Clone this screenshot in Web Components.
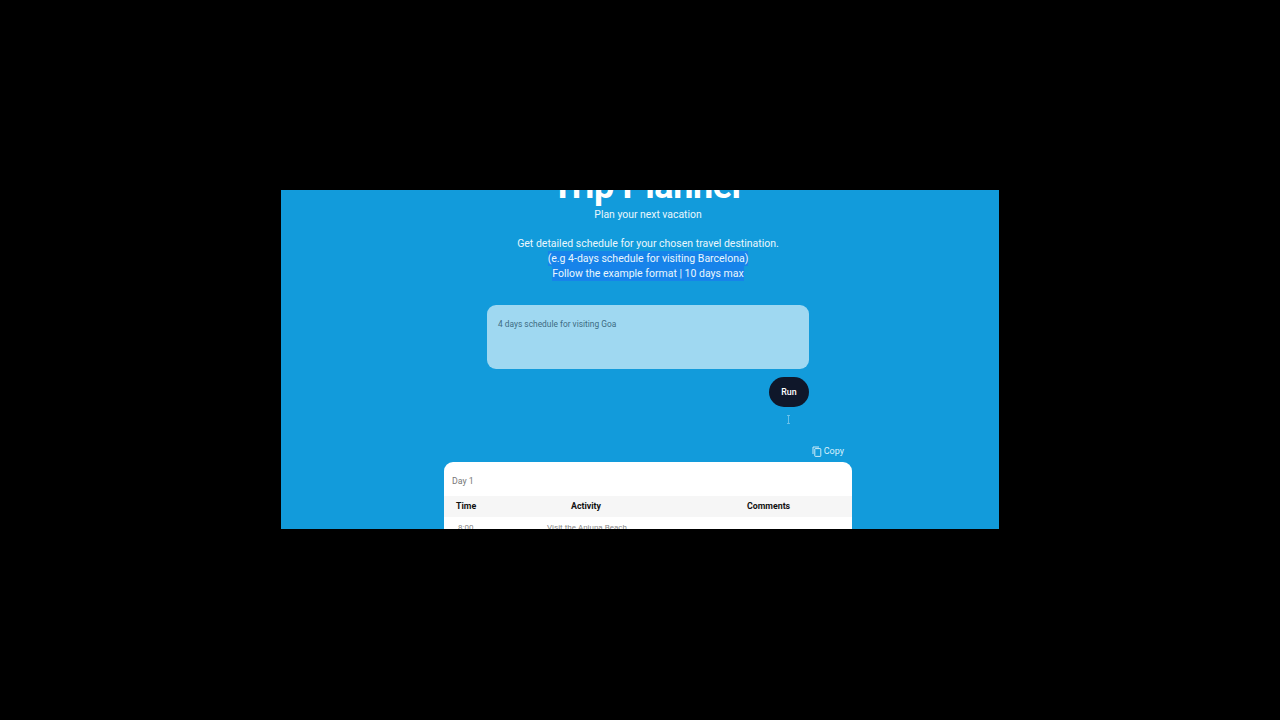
<!DOCTYPE html>
<html>
<head>
<meta charset="utf-8">
<title>Trip Planner</title>
<style>
html, body { margin: 0; height: 100%; background: #000; }
body { display: flex; align-items: center; justify-content: center; font-family: Roboto, "Open Sans", sans-serif; }
</style>
</head>
<body>
<trip-frame>
  <trip-header></trip-header>
  <trip-form></trip-form>
  <trip-result></trip-result>
</trip-frame>
<script>
class TripFrame extends HTMLElement {
  constructor() {
    super();
    this.attachShadow({mode: 'open'}).innerHTML = `
    <style>
    :host {
      display: flex;
      flex-direction: column;
      align-items: center;
      width: 702px;
      height: 339px;
      padding-left: 16px;
      margin-top: -1px;
      overflow: hidden;
      background: #129bdb;
      color: #fff;
    }
    </style>
    <slot></slot>`;
  }
}

class TripHeader extends HTMLElement {
  constructor() {
    super();
    this.attachShadow({mode: 'open'}).innerHTML = `
    <style>
    :host { display: flex; flex-direction: column; align-items: center; margin-top: -24px; }
    h1 { margin: 0; font-size: 36px; line-height: 41px; font-weight: 700; letter-spacing: -0.4px; }
    .sub { font-size: 10.400px; line-height: 15px; color: #eaf7fd; }
    .desc { margin-top: 14px; font-size: 10.500px; line-height: 15px; text-align: center; color: #eaf7fd; }
    .sel { display: inline-block; background: #1783ea; color: inherit; }
    </style>
    <h1>Trip Planner</h1>
    <div class="sub">Plan your next vacation</div>
    <div class="desc">
      Get detailed schedule for your chosen travel destination.<br>
      <span class="sel">(e.g 4-days schedule for visiting Barcelona)</span><br>
      <span class="sel">Follow the example format | 10 days max</span>
    </div>`;
  }
}

class TripForm extends HTMLElement {
  constructor() {
    super();
    this.attachShadow({mode: 'open'}).innerHTML = `
    <style>
    :host { display: flex; flex-direction: column; align-items: flex-end; width: 322px; margin-top: 24px; }
    .input {
      box-sizing: border-box;
      width: 100%;
      height: 64px;
      padding: 13px 11px;
      border-radius: 9px;
      background: #9fd8f1;
      color: #3d6b82;
      font-size: 8.400px;
      line-height: 13px;
    }
    button {
      width: 40px;
      height: 30px;
      margin-top: 8px;
      padding: 0;
      border: none;
      border-radius: 15px;
      background: #0f172a;
      color: #fff;
      font: 500 8.800px Roboto, sans-serif;
    }
    .caret { width: 40px; height: 12px; margin-top: 8px; display: flex; justify-content: center; }
    </style>
    <div class="input">4 days schedule for visiting Goa</div>
    <button>Run</button>
    <div class="caret">
      <svg width="4" height="9" viewBox="0 0 4 9" fill="none" stroke="#7cc8ec" stroke-width=".8"><path d="M0 .5h3M1.500 .5v8M0 8.500h3"/></svg>
    </div>`;
  }
}

class TripResult extends HTMLElement {
  constructor() {
    super();
    this.attachShadow({mode: 'open'}).innerHTML = `
    <style>
    :host { display: flex; flex-direction: column; width: 408px; margin-top: 18px; flex: none; }
    .copy { display: flex; justify-content: flex-end; align-items: center; gap: 2px; height: 12px; padding-right: 8px; margin-bottom: 5px; font-size: 9px; color: #d9f1fb; }
    .card { background: #fff; border-radius: 9px 9px 0 0; color: #222; height: 80px; }
    .day { height: 34px; line-height: 38px; padding-left: 8px; font-size: 8.800px; color: #777; }
    .row { display: grid; grid-template-columns: 127px 176px 1fr; margin: 0; font-size: 8.800px; }
    .head { height: 21px; line-height: 21px; background: #f6f6f6; font-weight: 700; color: #111; }
    .head span:first-child { padding-left: 12px; }
    .body { line-height: 22px; color: #888; font-size: 8px; }
    .body span:first-child { padding-left: 14px; }
    .body span:nth-child(2) { margin-left: -24px; }
    </style>
    <div class="copy">
      <svg width="10" height="11" viewBox="0 0 10 11" fill="none" stroke="#e3f5fc" stroke-width=".9"><path d="M1 8V1h6"/><rect x="2.800" y="2.600" width="6" height="7.800" rx=".6"/></svg>
      <span>Copy</span>
    </div>
    <div class="card">
      <div class="day">Day 1</div>
      <div class="row head"><span>Time</span><span>Activity</span><span>Comments</span></div>
      <div class="row body"><span>8:00</span><span>Visit the Anjuna Beach</span><span></span></div>
    </div>`;
  }
}

customElements.define('trip-frame', TripFrame);
customElements.define('trip-header', TripHeader);
customElements.define('trip-form', TripForm);
customElements.define('trip-result', TripResult);
</script>
</body>
</html>
